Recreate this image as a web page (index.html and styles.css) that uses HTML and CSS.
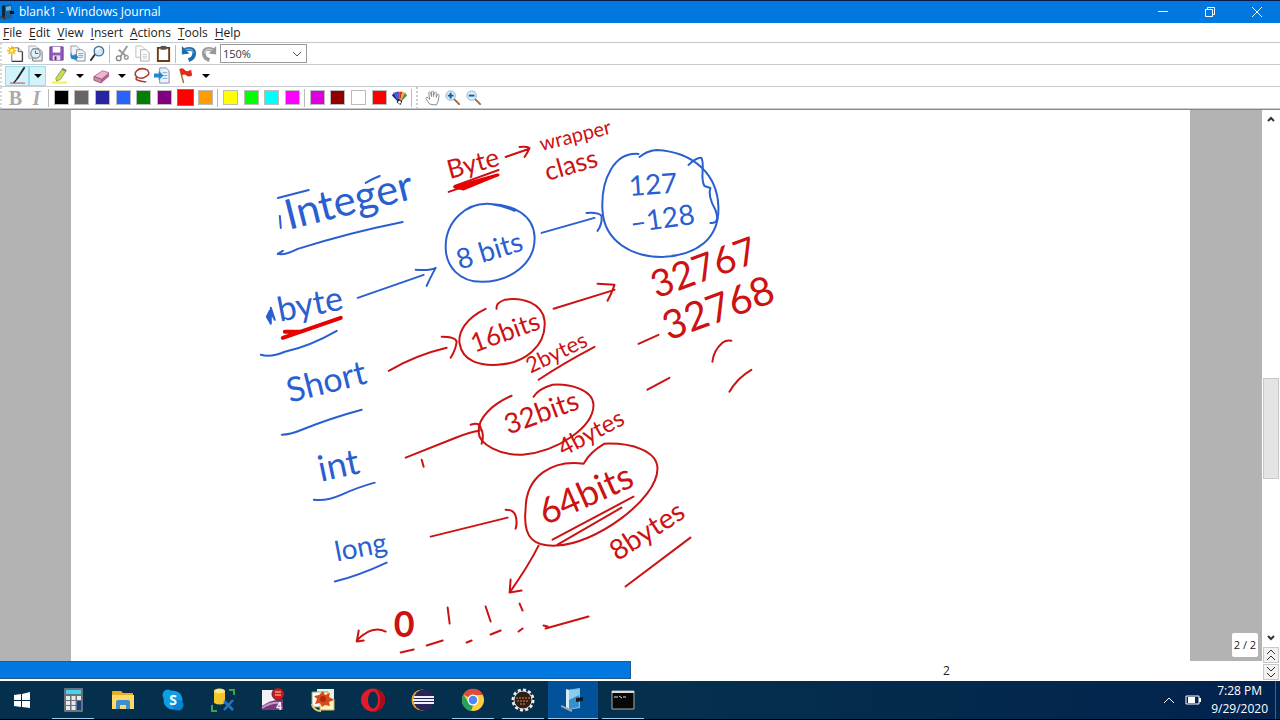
FILE: index.html
```html
<!DOCTYPE html>
<html lang="en">

<head>
  <meta charset="UTF-8">
  <meta name="viewport" content="width=device-width, initial-scale=1.0">
  <title>blank1 - Windows Journal</title>
  <link rel="stylesheet" href="styles.css">
</head>

<body>
  <header class="titlebar">
    <svg class="app-icon" viewBox="0 0 16 18">
      <path d="M4 2l8-1v14l-8 2z" fill="#1d5f8f" />
      <path d="M2 3l3-1v14l-3-1z" fill="#0b2a42" />
      <path d="M6 4l5-1v4l-5 1z" fill="#6fb3dd" />
      <path d="M10 8h4v3h-4z" fill="#111" />
      <path d="M0 14l6 2" stroke="#3a4650" stroke-width="2" />
    </svg>
    <h1>blank1 - Windows Journal</h1>
    <div class="window-buttons">
      <button aria-label="Minimize"><svg width="12" height="12" viewBox="0 0 12 12"><path d="M1 5.500h10" /></svg></button>
      <button aria-label="Restore"><svg width="12" height="12" viewBox="0 0 12 12"><path d="M1.500 3.500h7v7h-7zM3.500 3.500v-2h7v7h-2" /></svg></button>
      <button aria-label="Close"><svg width="12" height="12" viewBox="0 0 12 12"><path d="M1 1l10 10M11 1L1 11" /></svg></button>
    </div>
  </header>

  <nav class="menu">
    <button><u>F</u>ile</button>
    <button><u>E</u>dit</button>
    <button><u>V</u>iew</button>
    <button><u>I</u>nsert</button>
    <button><u>A</u>ctions</button>
    <button><u>T</u>ools</button>
    <button><u>H</u>elp</button>
  </nav>

  <div class="toolbar">
    <div class="group five">
      <button aria-label="New note"><svg viewBox="0 0 18 18"><path d="M5 3h7l4 4v10H5z" fill="#fff" stroke="#777" /><path d="M16.500 7v10.500H5" fill="none" stroke="#333" /><path d="M12 3v4h4" fill="#ddd" stroke="#555" /><path d="M5 1v10M0 6h10M1.500 2.500l7 7M8.500 2.500l-7 7" stroke="#f0c419" stroke-width="1.500" /><circle cx="5" cy="6" r="2.500" fill="#fff27a" stroke="#e5ac00" /></svg></button>
      <button aria-label="Recent"><svg viewBox="0 0 18 18"><path d="M2 1h7l3 3v10H2z" fill="#f3f3f3" stroke="#aaa" /><path d="M6 4h7l3 3v10H6z" fill="#eee" stroke="#777" /><circle cx="9" cy="9" r="5" fill="#e4f0f6" stroke="#7d9db0" stroke-width="1.500" /><path d="M9 6v3h3" fill="none" stroke="#456" /></svg></button>
      <button aria-label="Save"><svg viewBox="0 0 18 18"><path d="M2 2h14v14H2z" fill="#8e5cb8" stroke="#6b3c95" /><path d="M5 2h8v6H5z" fill="#fff" /><path d="M5 11h8v5H5z" fill="#e7dcf1" /><path d="M7 12h2v4H7z" fill="#5b2c85" /></svg></button>
      <button aria-label="Import"><svg viewBox="0 0 18 18"><path d="M2 1h6l3 3v7H2z" fill="#eef6fb" stroke="#999" /><path d="M8 5h6l3 3v9H8z" fill="#eef6fb" stroke="#888" /><path d="M10 9h5M10 11h5M10 13h5" stroke="#72a7cf" /><path d="M3 8v3h3V9l4 4-4 4v-2H3q-3-3 0-7z" fill="#2386c8" /></svg></button>
      <button aria-label="Find"><svg viewBox="0 0 18 18"><path d="M7 9l-5 7" stroke="#333" stroke-width="2" stroke-linecap="round" /><circle cx="10.500" cy="6.500" r="5" fill="#cde8fa" stroke="#4b7192" stroke-width="1.500" /><path d="M7.500 6a3 3 0 0 1 4-2" fill="none" stroke="#fff" stroke-width="2" /></svg></button>
    </div>
    <span class="separator"></span>
    <div class="group three">
      <button aria-label="Cut"><svg viewBox="0 0 18 18"><path d="M14 1L7 12M5 5l8 7" fill="none" stroke="#999" stroke-width="2" /><circle cx="5" cy="14" r="2.500" fill="none" stroke="#888" stroke-width="1.500" /><circle cx="13" cy="13" r="2" fill="none" stroke="#999" stroke-width="1.500" /></svg></button>
      <button aria-label="Copy"><svg viewBox="0 0 18 18"><path d="M2 1h6l3 3v9H2z" fill="#fff" stroke="#bbb" /><path d="M7 5h6l3 3v9H7z" fill="#fff" stroke="#aaa" /><path d="M9 10h5M9 12h5M9 14h5" stroke="#ccc" /></svg></button>
      <button aria-label="Paste"><svg viewBox="0 0 18 18"><path d="M3 3h12v14H3z" fill="#fff" stroke="#6b3d12" stroke-width="2" /><path d="M6 1h6v4H6z" fill="#555" /></svg></button>
    </div>
    <span class="separator"></span>
    <div class="group two">
      <button aria-label="Undo"><svg viewBox="0 0 18 18"><path d="M5 5q10-3 10 4 0 5-6 7" fill="none" stroke="#216cab" stroke-width="4" /><path d="M2 1v9l8-1z" fill="#216cab" /><path d="M6 5q8-2 8 4" fill="none" stroke="#59aee0" stroke-width="1.500" /></svg></button>
      <button aria-label="Redo"><svg viewBox="0 0 18 18"><path d="M13 5Q3 2 3 9q0 5 6 7" fill="none" stroke="#999" stroke-width="4" /><path d="M16 1v9L8 9z" fill="#999" /><path d="M12 5Q4 3 4 9" fill="none" stroke="#ccc" stroke-width="1.500" /></svg></button>
    </div>
    <select class="zoom" aria-label="Zoom">
      <option>150%</option>
    </select>
  </div>

  <div class="toolbar">
    <div class="split active">
      <button aria-label="Pen"><svg viewBox="0 0 18 18"><path d="M16 1L9 12" stroke="#223" stroke-width="2" stroke-linecap="round" /><path d="M9 12l-4 5" stroke="#223" stroke-width="1.500" /><path d="M1 17h16" stroke="#c33b4b" /></svg></button>
      <button class="arrow" aria-label="Pen options"></button>
    </div>
    <div class="split">
      <button aria-label="Highlighter"><svg viewBox="0 0 18 18"><path d="M1 16.500h16" stroke="#fff45c" stroke-width="3" /><path d="M12 2l4 2-6 9-4 2-1-3z" fill="#c9dd52" stroke="#8a9f48" /><path d="M12 2l4 2" stroke="#777" stroke-width="2" /></svg></button>
      <button class="arrow" aria-label="Highlighter options"></button>
    </div>
    <div class="split">
      <button aria-label="Eraser"><svg viewBox="0 0 18 18"><path d="M1 10l9-6 7 2-8 7z" fill="#eeb4cf" stroke="#b77596" /><path d="M1 10l8 3v4l-8-3z" fill="#d688ac" stroke="#96587a" /><path d="M9 13l8-7v4l-8 7z" fill="#b1638d" /></svg></button>
      <button class="arrow" aria-label="Eraser options"></button>
    </div>
    <div class="group two">
      <button aria-label="Selection tool"><svg viewBox="0 0 18 18"><path d="M5 11Q0 8 4 4t11-1q4 4-1 7-4 3-10 1-2 2 1 3t9 2" fill="none" stroke="#a83e30" stroke-width="1.600" /></svg></button>
      <button aria-label="Insert space"><svg viewBox="0 0 18 18"><path d="M6 1h7l3 3v13H6z" fill="#e8f4fb" stroke="#88a" /><path d="M9 6h5M9 9h5M9 12h5" stroke="#7ca8d0" /><path d="M0 7h5V4l5 5-5 5v-3H0z" fill="#2189cf" /></svg></button>
    </div>
    <div class="split">
      <button aria-label="Flag"><svg viewBox="0 0 18 18"><path d="M3 2l4 15" stroke="#a06a2c" stroke-width="1.500" /><path d="M3 2q3-2 5 1t7 0l1 6q-4 2-6 0T5 9z" fill="#e8271c" /></svg></button>
      <button class="arrow" aria-label="Flag options"></button>
    </div>
  </div>

  <div class="toolbar">
    <div class="group two">
      <button class="format" aria-label="Bold"><b>B</b></button>
      <button class="format" aria-label="Italic"><b><i>I</i></b></button>
    </div>
    <span class="separator"></span>
    <div class="group eight">
      <button class="swatch black" aria-label="Black"></button>
      <button class="swatch gray" aria-label="Gray"></button>
      <button class="swatch navy" aria-label="Dark blue"></button>
      <button class="swatch blue" aria-label="Blue"></button>
      <button class="swatch green" aria-label="Green"></button>
      <button class="swatch purple" aria-label="Purple"></button>
      <button class="swatch red selected" aria-label="Red"></button>
      <button class="swatch orange" aria-label="Orange"></button>
    </div>
    <span class="separator"></span>
    <div class="group four">
      <button class="swatch yellow" aria-label="Yellow"></button>
      <button class="swatch lime" aria-label="Lime"></button>
      <button class="swatch cyan" aria-label="Cyan"></button>
      <button class="swatch magenta" aria-label="Magenta"></button>
    </div>
    <span class="separator"></span>
    <div class="group five">
      <button class="swatch violet" aria-label="Violet"></button>
      <button class="swatch maroon" aria-label="Maroon"></button>
      <button class="swatch white" aria-label="White"></button>
      <button class="swatch red" aria-label="Custom red"></button>
      <button aria-label="More colors"><svg viewBox="0 0 18 18"><path d="M9 15L1 7l2-3z" fill="#1a2a7c" /><path d="M9 15L3 4l3-1z" fill="#2c62d9" /><path d="M9 15L6 3h3z" fill="#7639a5" /><path d="M9 15V3h3z" fill="#d32b2b" /><path d="M9 15l3-12 3 1z" fill="#f0a423" /><path d="M9 15l6-11 2 3z" fill="#3b9645" /><path d="M7 10l5 3-2 4-4-3z" fill="#222" /><circle cx="9" cy="14" r="1.500" fill="#fff" /></svg></button>
    </div>
    <span class="separator"></span>
    <span class="grip"></span>
    <div class="group three">
      <button aria-label="Pan"><svg viewBox="0 0 18 18"><path d="M6 16L2 10q0-2 2-1l2 2-1-7q1-2 2 0l1 4V3q1-2 2 0v5l1-4q1-2 2 0v5l1-3q2-1 2 1l-1 6-2 4z" fill="#fff" stroke="#888" /></svg></button>
      <button aria-label="Zoom in"><svg viewBox="0 0 18 18"><path d="M11 11l5 5" stroke="#9b6b3d" stroke-width="2" stroke-linecap="round" /><circle cx="7" cy="7" r="5" fill="#d5edfb" stroke="#8ab4d4" /><path d="M4 7h6M7 4v6" stroke="#145a9a" stroke-width="2" /></svg></button>
      <button aria-label="Zoom out"><svg viewBox="0 0 18 18"><path d="M11 11l5 5" stroke="#9b6b3d" stroke-width="2" stroke-linecap="round" /><circle cx="7" cy="7" r="5" fill="#d5edfb" stroke="#8ab4d4" /><path d="M4 7h6" stroke="#145a9a" stroke-width="2" /></svg></button>
    </div>
  </div>

  <main class="workspace">
    <div class="document">
      <div class="desk">
        <div class="page">
          <svg class="ink" viewBox="70 110 1120 551" preserveAspectRatio="xMinYMin meet">
            <!-- blue pen -->
            <g class="blue-pen">
              <path d="M277 198l31-8M279 216l1 12M365 183q6-4 14-7" />
              <path d="M277 254q6 2 20-5 50-16 105-27M277 254l5-3" />
              <path d="M490 204c-24-2-45 17-45 43 0 20 14 35 36 35 28 0 54-18 53-45-1-22-21-32-44-33q14 2 24 7" />
              <path d="M357 298l66-23M415 270q15 1 20-2-6 11-9 18" />
              <path d="M541 233l53-15M586 213q12-1 15 3 1 8-4 15" />
              <path d="M638 154c-24-2-38 25-36 57 2 30 29 47 62 46 31-2 55-17 54-50-1-32-24-55-62-57q-10 1-17 7" />
              <path d="M688 165q9-8 13-7c4 9-2 19 3 28l6 2q-3 8 5 22 5 14-5 13" />
              <path d="M270 308v16l-4-7 3-6 5 9z" class="filled" />
              <path d="M260 355q10 3 24-3 26-6 52-21" />
              <path d="M281 435q8 0 20-5 30-12 60-20" />
              <path d="M313 500q12 2 28-5 15-7 33-12" />
              <path d="M334 582q24-6 52-19" />
            </g>
            <g class="blue-pen words">
              <text x="288" y="230" font-size="42" transform="rotate(-14 288 230)">Integer</text>
              <text x="459" y="270" font-size="28" transform="rotate(-17 459 270)">8 bits</text>
              <text x="629" y="196" font-size="28" transform="rotate(-4 629 196)">127</text>
              <text x="631" y="233" font-size="28" transform="rotate(-8 631 233)">–128</text>
              <text x="279" y="322" font-size="34" transform="rotate(-11 279 322)">byte</text>
              <text x="289" y="403" font-size="34" transform="rotate(-14 289 403)">Short</text>
              <text x="320" y="482" font-size="36" transform="rotate(-12 320 482)">int</text>
              <text x="336" y="562" font-size="28" transform="rotate(-11 336 562)">long</text>
            </g>

            <!-- red pen -->
            <g class="red-pen">
              <path d="M505 157l23-8M519 147q7-1 10 1-2 5-5 9" />
              <path d="M448 192l50-17M454 186l44-16" />
              <path d="M454 187l43-12-34 14z" class="filled" />
              <path d="M282 338l58-20M284 332l15 0" class="thick" />
              <path d="M388 371q28-16 58-23M441 337q14 0 15 5-1 8-6 16" />
              <path d="M485 309c-19 9-28 23-26 35 3 18 21 22 38 21 27-1 49-19 47-44-2-18-23-24-40-21q-9 3-8 9" />
              <path d="M553 309l61-19M597 284l17 1q-3 9-7 16" />
              <path d="M538 380q22-15 56-33" />
              <path d="M405 458l50-20q15-6 24-7M421 460l2 7M470 425q9-3 10 3 4 7 1 16" />
              <path d="M511 396c-20 9-33 22-33 35-1 14 23 25 44 24 34-3 71-27 71-50-1-16-25-21-41-20q-14 4-19 12" />
              <path d="M638 344l20-9M647 390l22-12M712 362q1-11 10-19 4-3 9-2M729 392q8-14 22-22" />
              <path d="M430 537l77-19M505 510q8 0 10 6 2 7 0 13" />
              <path d="M583 464c-31-4-58 12-58 46-3 29 9 37 31 36 38-1 101-46 101-77 0-18-26-26-53-25q-14 8-21 20" />
              <path d="M552 540l81-43M557 545l64-37" />
              <path d="M625 587l65-49" />
              <path d="M538 546q-10 20-29 47M510 580l-1 13 12-2" />
              <path d="M385 632q-14-7-29 9M358 631l-2 11 7-1" />
              <path d="M447 608l2 16M485 607l5 15M519 604l3 7" />
              <path d="M400 653l13-3M426 646l16-5M466 643l5-2M490 635l10-4M518 632l4-3M543 626l4 1M545 629l43-12" />
            </g>
            <g class="red-pen words">
              <text x="449" y="179" font-size="26" transform="rotate(-15 449 179)">Byte</text>
              <text x="541" y="151" font-size="20" transform="rotate(-14 541 151)">wrapper</text>
              <text x="547" y="181" font-size="26" transform="rotate(-16 547 181)">class</text>
              <text x="474" y="353" font-size="26" transform="rotate(-20 474 353)">16bits</text>
              <text x="530" y="374" font-size="22" transform="rotate(-26 530 374)">2bytes</text>
              <text x="508" y="435" font-size="28" transform="rotate(-20 508 435)">32bits</text>
              <text x="563" y="457" font-size="24" transform="rotate(-28 563 457)">4bytes</text>
              <text x="545" y="526" font-size="36" transform="rotate(-24 545 526)">64bits</text>
              <text x="617" y="562" font-size="28" transform="rotate(-33 617 562)">8bytes</text>
              <text x="656" y="299" font-size="38" transform="rotate(-20 656 299)">32767</text>
              <text x="668" y="341" font-size="40" transform="rotate(-20 668 341)">32768</text>
              <text x="393" y="637" font-size="36" class="heavy">0</text>
            </g>
          </svg>
        </div>
        <output class="page-badge">2 / 2</output>
      </div>
      <div class="page-strip">
        <span class="progress"></span>
        <span class="page-number">2</span>
      </div>
    </div>

    <aside class="scroll">
      <button aria-label="Scroll up"><svg viewBox="0 0 12 12"><path d="M3 8l3-3 3 3" /></svg></button>
      <div class="track"><span class="thumb"></span></div>
      <button aria-label="Scroll down"><svg viewBox="0 0 12 12"><path d="M3 4l3 3 3-3" /></svg></button>
      <button class="boxed" aria-label="Previous page"><svg viewBox="0 0 12 12"><path d="M2 5l4-4 4 4M2 11l4-4 4 4" /></svg></button>
      <button class="boxed" aria-label="Next page"><svg viewBox="0 0 12 12"><path d="M2 1l4 4 4-4M2 7l4 4 4-4" /></svg></button>
    </aside>
  </main>

  <footer class="taskbar">
    <button aria-label="Start"><svg width="18" height="18" viewBox="0 0 18 18"><path d="M1 4l7-1v6H1zM9 3l8-2v8H9zM1 10h7v6l-7-1zM9 10h8v7l-8-1z" fill="#fff" /></svg></button>
    <button class="running" aria-label="Calculator"><svg viewBox="0 0 24 24"><rect x="3" y="0" width="19" height="24" rx="1" fill="#69737b" /><rect x="5" y="2" width="15" height="4" fill="#48d2f0" /><path d="M5 8h4v4H5zM10.500 8h4v4h-4zM16 8h4v4h-4zM5 13h4v4H5zM10.500 13h4v4h-4zM5 18h4v4H5zM10.500 18h4v4h-4z" fill="#e6eaec" /><path d="M16 13h4v9h-4z" fill="#123f86" /></svg></button>
    <button aria-label="File Explorer"><svg viewBox="0 0 24 24"><path d="M1 4q0-1 1-1h8l2 2h10v16H1z" fill="#e8ad25" /><path d="M1 7h22v14H1z" fill="#ffd966" /><path d="M5 21v-7q0-2 2-2h10q2 0 2 2v7h-4v-4H9v4z" fill="#3b8fce" /></svg></button>
    <button aria-label="Skype"><svg viewBox="0 0 24 24"><circle cx="12" cy="12" r="9.500" fill="#0c9fe5" /><circle cx="7" cy="7" r="5.500" fill="#0c9fe5" /><circle cx="17" cy="17" r="5.500" fill="#0784d4" /><text x="12" y="17" class="skype">S</text></svg></button>
    <button aria-label="SQL Developer"><svg viewBox="0 0 24 24"><path d="M3 3v12q6 3 11 0V3z" fill="#f2c52c" /><ellipse cx="8.500" cy="3" rx="5.500" ry="2.500" fill="#ffe67d" /><path d="M18 2h5v5M1 17v6h5" fill="none" stroke="#3da447" stroke-width="2" /><path d="M13 13l9 9M22 12l-9 10" stroke="#2777be" stroke-width="2.500" /></svg></button>
    <button aria-label="Note Taker 4"><svg viewBox="0 0 24 24"><path d="M1 2h18v20H1z" fill="#f4f0f5" /><path d="M1 18q8-6 21-7v11H1z" fill="#76397d" /><path d="M1 20q9-6 18-5" fill="none" stroke="#c59bc8" stroke-width="2" /><circle cx="17" cy="6" r="6" fill="#c91c1c" stroke="#5f2424" /><path d="M14 4h6M14 7h6" stroke="#f49286" stroke-width="1.500" /><text x="18" y="22" class="note">4</text></svg></button>
    <button aria-label="Picture Manager"><svg viewBox="0 0 24 24"><path d="M6 1h17v14H6z" fill="#e7f3df" /><path d="M1 4h16v15H1z" fill="#fff" stroke="#89a66d" /><path d="M9 11h14v11H9z" fill="#fff3c0" stroke="#d0ba66" /><path d="M12 3l2 4 5-2-1 4 5 3-5 2 1 4-5-1-3 2-2-4-5 1 2-5-3-3 5-1z" fill="#db4a1d" /><circle cx="12" cy="11" r="3" fill="#a92c12" /><path d="M1 16q2 7 9 7" fill="none" stroke="#e6cd71" stroke-width="2" /></svg></button>
    <button aria-label="Opera"><svg viewBox="0 0 24 24"><ellipse cx="12" cy="12" rx="12" ry="11.500" fill="#e11b2b" /><path d="M14 1q10 1 10 11T14 23q5-3 5-11T14 1z" fill="#a60d1d" /><ellipse cx="12" cy="12" rx="5" ry="8.500" fill="#06304d" /></svg></button>
    <button aria-label="Eclipse"><svg viewBox="0 0 24 24"><circle cx="11" cy="12" r="10.500" fill="#f6a52c" /><circle cx="13" cy="12" r="10.500" fill="#2b2458" /><path d="M3 9h20M2 12h21M3 15h20" stroke="#eef" stroke-width="1.800" /></svg></button>
    <button class="running" aria-label="Chrome"><svg viewBox="0 0 24 24"><circle cx="12" cy="12" r="11" fill="#ffcd40" /><path d="M12 12L2.500 6.500A11 11 0 0 1 22 7H12z" fill="#dd4c3b" /><path d="M2.500 6.500L9 17l4-2-3 8A11 11 0 0 1 2.500 6.500z" fill="#24a15b" /><circle cx="12" cy="12" r="5.500" fill="#fff" /><circle cx="12" cy="12" r="4.300" fill="#4b88ef" /></svg></button>
    <button class="running" aria-label="GeoGear"><svg viewBox="0 0 24 24"><circle cx="12" cy="12" r="10" fill="none" stroke="#eee" stroke-width="3" stroke-dasharray="3 2.200" /><circle cx="12" cy="12" r="9" fill="#2c2019" stroke="#ddd" /><path d="M5 10h14M6 13h12M9 16h6" stroke="#b15f28" stroke-width="1.500" stroke-dasharray="2 1" /></svg></button>
    <button class="running current" aria-label="Windows Journal"><svg viewBox="0 0 24 24"><path d="M6 2l13-2v20L6 22z" fill="#7fc2ec" /><path d="M5 1l3 1v19l-3-1z" fill="#dcecf5" /><path d="M8 2l10-1v18L8 21z" fill="#3b8fc9" /><path d="M8 2l10-1v6L8 12z" fill="#8accee" /><path d="M15 10l7-1v4l-7 1z" fill="#111c27" /><path d="M0 18l11 5" stroke="#9aa4a4" stroke-width="2" /></svg></button>
    <button class="running" aria-label="Command Prompt"><svg viewBox="0 0 24 24"><path d="M1 3h22v18H1z" fill="#080808" stroke="#aaa" /><path d="M1 4h22" stroke="#ddd" stroke-width="2" /><path d="M3 9h4M8 8l3 2M12 9h3" stroke="#ddd" /></svg></button>

    <div class="tray">
      <button aria-label="Show hidden icons"><svg width="12" height="12" viewBox="0 0 12 12"><path d="M1 9l5-5 5 5" fill="none" stroke="#fff" /></svg></button>
      <svg class="battery" viewBox="0 0 16 10"><path d="M1 1h13v8H1z" fill="none" stroke="#fff" /><path d="M3 2h7v6H3z" fill="#fff" /><path d="M15 3v4" stroke="#fff" stroke-width="2" /></svg>
      <div class="clock">
        <time>7:28 PM</time>
        <time>9/29/2020</time>
      </div>
    </div>
  </footer>
</body>

</html>
```
FILE: styles.css
```css
* {
  box-sizing: border-box;
}

body {
  display: flex;
  flex-direction: column;
  height: 100vh;
  margin: 0;
  overflow: hidden;
  background: #fff;
  color: #222;
  font-family: "Open Sans", "Noto Sans", sans-serif;
  font-size: 12px;
}

button {
  display: flex;
  align-items: center;
  justify-content: center;
  padding: 0;
  border: 0;
  background: none;
  color: inherit;
  font: inherit;
}

/* title bar */
.titlebar {
  display: flex;
  align-items: center;
  flex: none;
  height: 23px;
  border-top: 1px solid #06184a;
  background: #0078e0;
  color: #fff;
}

.app-icon {
  width: 16px;
  height: 18px;
}

.titlebar h1 {
  margin: 0 0 0 3px;
  font-size: 12px;
  font-weight: normal;
  line-height: 20px;
}

.window-buttons {
  display: flex;
  margin-left: auto;
}

.window-buttons button {
  width: 47px;
  height: 22px;
}

.window-buttons path {
  fill: none;
  stroke: #fff;
}

/* menu and toolbars */
.menu {
  display: flex;
  flex: none;
  gap: 7px;
  height: 20px;
  padding-left: 3px;
  border-bottom: 1px solid #c4c8cc;
}

.menu u {
  text-underline-offset: 2px;
}

.toolbar {
  display: flex;
  align-items: center;
  flex: none;
  height: 22px;
  padding-left: 3px;
  border-bottom: 1px solid #c8ccd0;
  border-left: 2px dotted #d8d8d8;
}

.toolbar svg {
  width: 17px;
  height: 17px;
}

.group {
  display: grid;
  grid-auto-flow: column;
  grid-auto-columns: 1fr;
  justify-items: center;
  align-items: center;
}

.two {
  width: 42px;
}

.three {
  width: 62px;
}

.four {
  width: 83px;
}

.five {
  width: 103px;
}

.eight {
  width: 165px;
}

.separator {
  width: 1px;
  height: 18px;
  margin: 0 2px 0 1px;
  background: #bbb;
}

.grip {
  height: 22px;
  margin: 0 4px 0 2px;
  border-left: 2px dotted #ccc;
}

.zoom {
  width: 87px;
  height: 19px;
  padding: 0 2px;
  border: 1px solid #999;
  border-radius: 0;
  appearance: none;
  background:
    linear-gradient(45deg, transparent 46%, #555 46% 60%, transparent 60%) 72px 7px / 4px 4px no-repeat,
    linear-gradient(-45deg, transparent 46%, #555 46% 60%, transparent 60%) 76px 7px / 4px 4px no-repeat,
    #fff;
  color: #333;
  font: inherit;
  font-size: 11px;
}

.split {
  display: flex;
  height: 20px;
  margin-right: 1px;
}

.split button {
  width: 24px;
}

.split .arrow {
  width: 17px;
}

.arrow::after {
  content: "";
  border: 4px solid transparent;
  border-top-color: #000;
  border-bottom: 0;
}

.active button {
  border: 1px solid #9fdcea;
  background: #d3f3fa;
}

.format {
  color: #aaa;
  font-family: "Liberation Serif", serif;
  font-size: 20px;
  line-height: 20px;
}

.swatch {
  width: 15px;
  height: 15px;
  border: 1px solid #bbb;
}

.selected {
  width: 17px;
  height: 17px;
  border-color: #777;
}

.black { background: #000; }
.gray { background: #666; }
.navy { background: #2626a0; }
.blue { background: #2962ff; }
.green { background: #008000; }
.purple { background: #800080; }
.red { background: #f00; }
.orange { background: #ff9d00; }
.yellow { background: #ff0; }
.lime { background: #0f0; }
.cyan { background: #0ff; }
.magenta { background: #f0f; }
.violet { background: #dc00dc; }
.maroon { background: #900000; }
.white { background: #fff; }

/* note */
.workspace {
  display: flex;
  flex: 1;
  min-height: 0;
  border-top: 1px solid #888;
}

.document {
  display: flex;
  flex: 1;
  flex-direction: column;
}

.desk {
  position: relative;
  flex: 1;
  min-height: 0;
  padding: 0 72px 0 71px;
  background: #b3b3b3;
}

.page {
  height: 100%;
  overflow: hidden;
  background: #fff;
}

.ink {
  display: block;
  width: 100%;
}

.ink path {
  fill: none;
  stroke-width: 2;
  stroke-linecap: round;
  stroke-linejoin: round;
}

.blue-pen {
  stroke: #2a5fd0;
}

.red-pen {
  stroke: #cc1212;
}

.ink .thick {
  stroke: #e60000;
  stroke-width: 4;
}

.blue-pen .filled {
  fill: #2a5fd0;
}

.red-pen .filled {
  fill: #e60000;
  stroke: #e60000;
  stroke-width: 3;
}

.words {
  stroke: none;
  font-family: Lato, sans-serif;
}

.words.blue-pen {
  fill: #2a5fd0;
}

.words.red-pen {
  fill: #cc1212;
}

.heavy {
  font-weight: bold;
}

.page-badge {
  position: absolute;
  right: 4px;
  bottom: 4px;
  width: 26px;
  border-radius: 2px;
  background: #fff;
  font-size: 11px;
  line-height: 24px;
  text-align: center;
}

.page-strip {
  display: flex;
  flex: none;
  height: 20px;
  padding-bottom: 2px;
}

.progress {
  width: 50%;
  border: 1px solid #1c5b96;
  border-left: 0;
  background: #0078e0;
}

.page-number {
  width: 50%;
  line-height: 20px;
  text-align: center;
}

.scroll {
  display: flex;
  flex: none;
  flex-direction: column;
  align-items: center;
  width: 18px;
}

.scroll button {
  width: 16px;
  height: 18px;
}

.scroll svg {
  width: 12px;
  height: 12px;
}

.scroll path {
  fill: none;
  stroke: #333;
  stroke-width: 2;
}

.scroll .boxed {
  height: 16px;
  margin-bottom: 1px;
  border: 1px solid #c8c8c8;
  background: #f2f2f2;
}

.boxed path {
  stroke-width: 1;
}

.track {
  display: flex;
  flex: 1;
  flex-direction: column;
  justify-content: flex-end;
  width: 16px;
  padding-bottom: 150px;
}

.thumb {
  height: 101px;
  border: 1px solid #c8c8c8;
  background: #e4e4e4;
}

/* taskbar */
.taskbar {
  display: flex;
  flex: none;
  height: 39px;
  border-bottom: 1px solid #000;
  background: linear-gradient(90deg, #05304d, #05304d 50%, #02224e);
  color: #fff;
}

.taskbar > button {
  width: 50px;
  border-bottom: 1px solid transparent;
}

.taskbar > button:first-child {
  width: 48px;
  padding-right: 4px;
}

.taskbar > button svg {
  width: 24px;
  height: 24px;
}

.taskbar > button:first-child svg {
  width: 18px;
  height: 18px;
}

.taskbar > .running {
  width: 42px;
  margin: 0 4px;
  border-bottom-color: #9cc9ec;
}

.taskbar > .current {
  width: 50px;
  margin: 0;
  background: #02529a;
}

.skype {
  fill: #fff;
  font-size: 14px;
  font-weight: bold;
  text-anchor: middle;
}

.note {
  fill: #fff;
  font-size: 10px;
  font-weight: bold;
  text-anchor: middle;
}

.tray {
  display: flex;
  align-items: center;
  gap: 10px;
  margin: 0 4px 0 auto;
  padding-right: 7px;
  border-right: 1px solid #456384;
}

.battery {
  width: 16px;
  height: 10px;
}

.clock {
  display: flex;
  flex-direction: column;
  align-items: center;
  font-size: 12px;
  line-height: 18px;
}
```
